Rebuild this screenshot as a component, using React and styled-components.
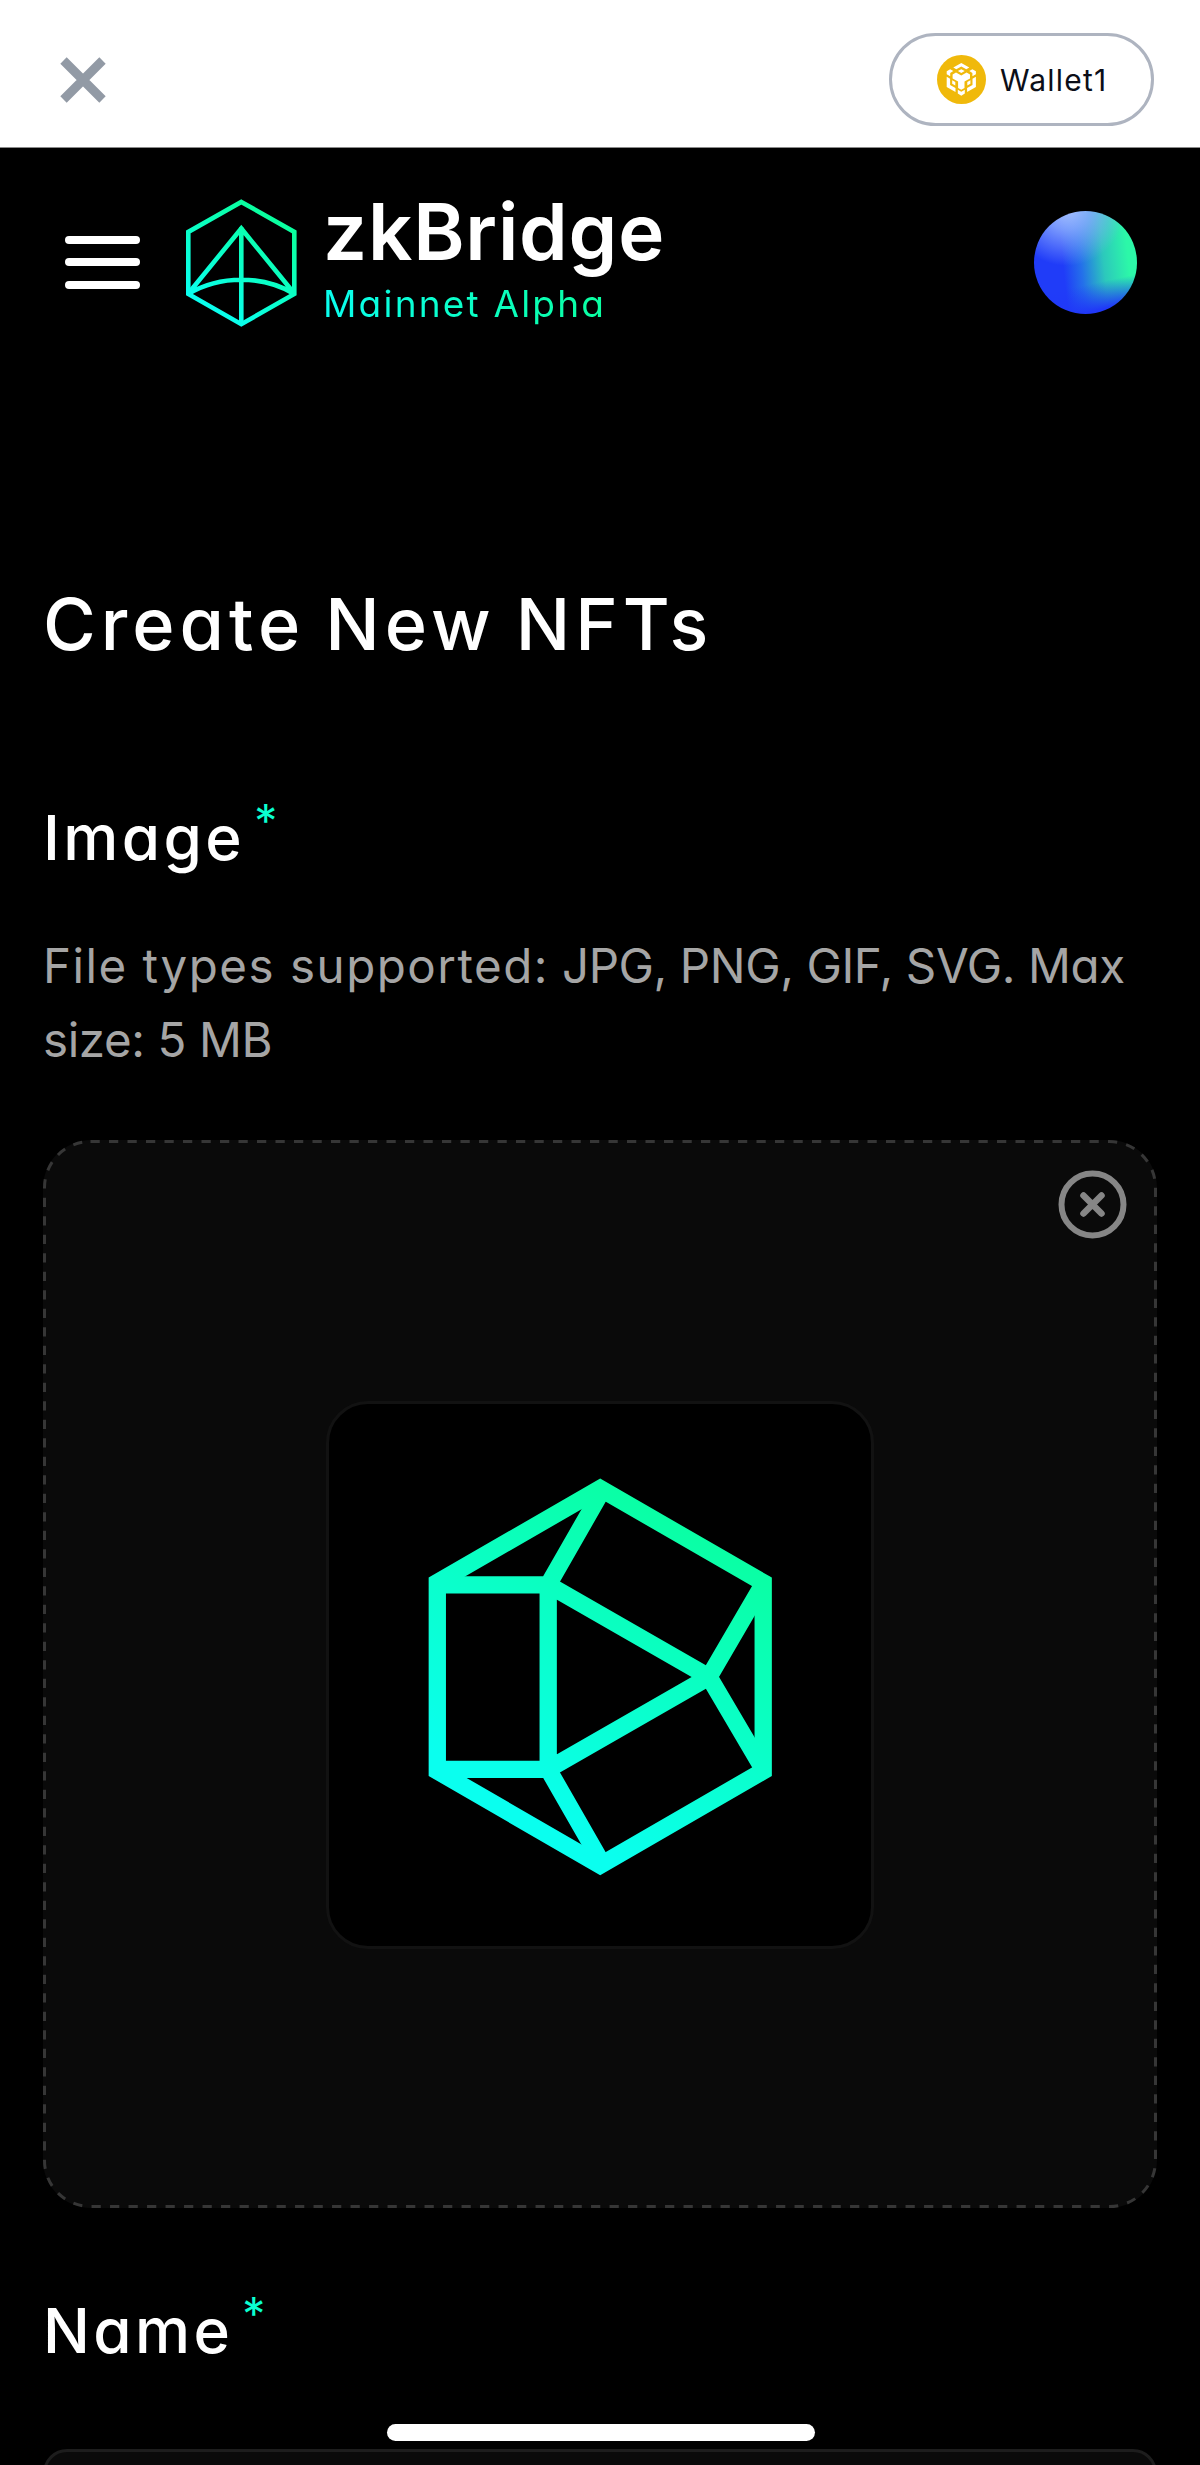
import React from 'react'
import styled, { createGlobalStyle } from 'styled-components'

const GlobalStyle = createGlobalStyle`
  * {
    box-sizing: border-box;
  }
  body {
    margin: 0;
    background: #000;
    font-family: Inter, 'Liberation Sans', sans-serif;
    font-feature-settings: 'cv11';
  }
  svg {
    display: block;
  }
`

const Page = styled.div`
  position: relative;
  height: 2465px;
  overflow: hidden;
  background: #000;
  color: #fff;
`

const WalletBar = styled.div`
  display: flex;
  align-items: center;
  justify-content: space-between;
  height: 148px;
  padding: 12px 46px 0 60px;
  background: #fff;
  border-bottom: 1px solid #8a8a8a;
`

const WalletButton = styled.button`
  display: flex;
  align-items: center;
  gap: 14px;
  width: 265px;
  height: 93px;
  padding: 0 0 0 45px;
  background: #fff;
  border: 3px solid #aeb4c0;
  border-radius: 47px;
  font-family: inherit;
  font-size: 30px;
  font-weight: 400;
  letter-spacing: 1.2px;
  color: #0b0e18;
`

const Header = styled.header`
  display: flex;
  align-items: center;
  height: 228px;
  padding: 0 63px 0 65px;
`

const Hamburger = styled.div`
  display: flex;
  flex-direction: column;
  gap: 14.5px;
  width: 75px;
  margin-right: 46px;
`

const Bar = styled.span`
  height: 8px;
  border-radius: 4px;
  background: #fff;
`

const LogoMark = styled.div`
  margin-top: 2px;
`

const Brand = styled.div`
  flex: 1;
  display: flex;
  flex-direction: column;
  align-items: flex-start;
  height: 134px;
  margin: -7px 0 0 26px;
`

const BrandName = styled.span`
  font-size: 78px;
  font-weight: 600;
  line-height: 80px;
  letter-spacing: 0.8px;
`

const BrandStage = styled.span`
  margin-top: 10px;
  font-size: 37px;
  line-height: 44px;
  letter-spacing: 2.2px;
  color: transparent;
  background: linear-gradient(90deg, #0affef, #0affa0);
  background-clip: text;
`

const Avatar = styled.div`
  width: 103px;
  height: 103px;
  border-radius: 50%;
  background:
    linear-gradient(168deg, #2038f800 68%, #2038f8 90%),
    radial-gradient(circle at 32% -4%, #a9c4ff 0%, #8fb0ffcc 18%, #7f9aff00 46%),
    linear-gradient(84deg, #203cf8 30%, #2470ea 46%, #2cc8bc 66%, #2cf8a8 88%);
`

const Main = styled.main`
  padding: 194px 43px 0;
`

const Title = styled.h1`
  margin: 0 0 115px;
  font-size: 72px;
  font-weight: 500;
  line-height: 108px;
  letter-spacing: 5px;
  word-spacing: -4px;
`

const Label = styled.label`
  display: flex;
  gap: 9px;
  height: 90px;
  font-size: 62px;
  font-weight: 500;
  line-height: 90px;
  letter-spacing: 3.4px;
`

const Required = styled.span`
  font-size: 46px;
  font-weight: 400;
  line-height: 57px;
  color: #0affd0;
`

const Hint = styled.p`
  margin: 46px 0 64px;
  font-size: 47.5px;
  line-height: 73.5px;
  letter-spacing: -0.4px;
  color: #a5a5a5;
`

const HintLead = styled.span`
  letter-spacing: 1.5px;
`

const DropZone = styled.div`
  position: relative;
  display: flex;
  align-items: center;
  justify-content: center;
  height: 1068px;
  margin-bottom: 78px;
  border-radius: 48px;
  background: #0a0a0a;
`

const DashedOutline = styled.svg`
  position: absolute;
  inset: 0;
  width: 100%;
  height: 100%;
`

const RemoveButton = styled.div`
  position: absolute;
  top: 30px;
  right: 30px;
`

const Preview = styled.div`
  width: 548px;
  height: 548px;
  margin-top: 1px;
  background: #000;
  border: 3px solid #121212;
  border-radius: 42px;
`

const Input = styled.div`
  height: 120px;
  margin-top: 73px;
  background: #0a0a0a;
  border: 3px solid #1d1d1d;
  border-radius: 24px;
`

const HomeIndicator = styled.div`
  position: absolute;
  left: 387px;
  bottom: 24px;
  width: 428px;
  height: 17px;
  border-radius: 9px;
  background: #fff;
`

const CloseIcon = () => (
  <svg width="46" height="46" viewBox="0 0 46 46" stroke="#929aa5" strokeWidth="9">
    <path d="M3.5 3.5l39 39M42.5 3.5l-39 39" />
  </svg>
)

const BnbIcon = () => (
  <svg width="49" height="49" viewBox="0 0 49 49">
    <circle cx="24.5" cy="24.5" r="24.5" fill="#f0b90b" />
    <g fill="#fff">
      <path d="M24.3 8l8 4.5-3 1.8-5-2.8-5 2.8-3-1.8z" />
      <path d="M24.3 14.2l3.4 1.9-3.4 2-3.4-2z" />
      <path d="M13.2 14.3l3.1 1.8-3.1 1.8v3.4l-3.5-2v-3z" />
      <path d="M35.4 14.3l-3.1 1.8 3.1 1.8v3.4l3.5-2v-3z" />
      <path d="M19 17.6l5.3 3 5.3-3 3.4 1.9v4l-5.5 3.1v6.3l-3.2 1.9-3.2-1.9v-6.3l-5.5-3.1v-4z" />
      <path d="M9.7 21.8l3.4 2v6.1l5.4 3.2v3.9l-8.8-5.1z" />
      <path d="M38.9 21.8l-3.4 2v6.1l-5.4 3.2v3.9l8.8-5.1z" />
      <path d="M15.2 25.3l3.1 1.8v3.4l-3.1-1.8zM33.4 25.3l-3.1 1.8v3.4l3.1-1.8z" />
      <path d="M20.8 34.7l3.5 2 3.5-2v3.9l-3.5 2.1-3.5-2.1z" />
    </g>
  </svg>
)

const BridgeLogo = () => (
  <svg width="111" height="128" viewBox="0 0 111 128" fill="none">
    <defs>
      <linearGradient id="bridge" gradientUnits="userSpaceOnUse" x1="22" y1="108" x2="84" y2="20">
        <stop stopColor="#0affef" />
        <stop offset="1" stopColor="#0affa0" />
      </linearGradient>
    </defs>
    <g stroke="url(#bridge)" strokeWidth="4.6">
      <path d="M55.3 2.9l53 30v62l-53 30.3-53-30.3v-62z" />
      <path d="M55.3 125V28M2.3 94.5L55.3 29.5l53 65M2.3 94.9C34 76 76.5 76 108.3 94.9" />
    </g>
  </svg>
)

const PolyhedronLogo = () => (
  <svg width="542" height="542" viewBox="0 0 542 542" fill="none">
    <defs>
      <linearGradient id="poly" gradientUnits="userSpaceOnUse" x1="190" y1="400" x2="355" y2="125">
        <stop stopColor="#0affef" />
        <stop offset="1" stopColor="#0affa5" />
      </linearGradient>
    </defs>
    <g stroke="url(#poly)" strokeWidth="17.3">
      <path d="M271.2 84.500L434.2 178.6V367L271.2 461.2L108.3 367V178.6z" />
      <path d="M219.2 180.8V365.3L380 273z" strokeLinejoin="bevel" />
      <path d="M108.3 180.8H219.2L271.2 90M108.3 365.3H219.2L271.2 456M434.2 180L380 273l54.2 92" />
    </g>
  </svg>
)

const RemoveIcon = () => (
  <svg width="69" height="69" viewBox="0 0 69 69" fill="none" stroke="#868686">
    <circle cx="34.5" cy="34.5" r="31" strokeWidth="6" />
    <path d="M25.5 25.5l18 18M43.5 25.5l-18 18" strokeWidth="6.5" strokeLinecap="round" />
  </svg>
)

const App = () => (
  <Page>
    <GlobalStyle />
    <WalletBar>
      <CloseIcon />
      <WalletButton>
        <BnbIcon />
        Wallet1
      </WalletButton>
    </WalletBar>
    <Header>
      <Hamburger>
        <Bar />
        <Bar />
        <Bar />
      </Hamburger>
      <LogoMark>
        <BridgeLogo />
      </LogoMark>
      <Brand>
        <BrandName>zkBridge</BrandName>
        <BrandStage>Mainnet Alpha</BrandStage>
      </Brand>
      <Avatar />
    </Header>
    <Main>
      <Title>Create New NFTs</Title>
      <Label>
        Image
        <Required>*</Required>
      </Label>
      <Hint>
        <HintLead>File types supported:</HintLead> JPG, PNG, GIF, SVG. Max
        <br />
        size: 5 MB
      </Hint>
      <DropZone>
        <DashedOutline>
          <rect
            x="1.5"
            y="1.5"
            width="1111"
            height="1065"
            rx="46"
            fill="none"
            stroke="#363636"
            strokeWidth="3"
            strokeDasharray="9.25 9.25"
          />
        </DashedOutline>
        <RemoveButton>
          <RemoveIcon />
        </RemoveButton>
        <Preview>
          <PolyhedronLogo />
        </Preview>
      </DropZone>
      <Label>
        Name
        <Required>*</Required>
      </Label>
      <Input />
    </Main>
    <HomeIndicator />
  </Page>
)

export default App
